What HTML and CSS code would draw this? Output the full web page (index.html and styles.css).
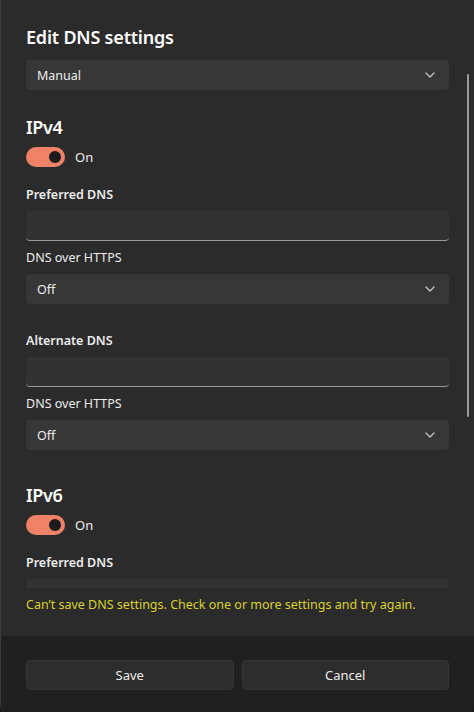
FILE: index.html
```html
<!DOCTYPE html>
<html>
<head>
<meta charset="utf-8">
<link rel="stylesheet" href="styles.css">
</head>
<body>
<div class="dialog">
  <div class="content">
    <div class="scroll">
      <h1 class="title">Edit DNS settings</h1>
      <div class="select select-first"><span>Manual</span><svg class="chev" width="10" height="6" viewBox="0 0 10 6"><path d="M1 1l4 4 4-4" fill="none" stroke="#c8c8c8" stroke-width="1.2" stroke-linecap="round" stroke-linejoin="round"/></svg></div>

      <h2 class="heading heading-v4">IPv4</h2>
      <div class="toggle-row"><span class="toggle"><span class="knob"></span></span><span class="toggle-text">On</span></div>
      <div class="label-bold">Preferred DNS</div>
      <div class="input"></div>
      <div class="label">DNS over HTTPS</div>
      <div class="select"><span>Off</span><svg class="chev" width="10" height="6" viewBox="0 0 10 6"><path d="M1 1l4 4 4-4" fill="none" stroke="#c8c8c8" stroke-width="1.2" stroke-linecap="round" stroke-linejoin="round"/></svg></div>

      <div class="label-bold label-gap">Alternate DNS</div>
      <div class="input"></div>
      <div class="label">DNS over HTTPS</div>
      <div class="select"><span>Off</span><svg class="chev" width="10" height="6" viewBox="0 0 10 6"><path d="M1 1l4 4 4-4" fill="none" stroke="#c8c8c8" stroke-width="1.2" stroke-linecap="round" stroke-linejoin="round"/></svg></div>

      <h2 class="heading heading-v6">IPv6</h2>
      <div class="toggle-row"><span class="toggle"><span class="knob"></span></span><span class="toggle-text">On</span></div>
      <div class="label-bold">Preferred DNS</div>
      <div class="input"></div>
    </div>
    <p class="error">Can’t save DNS settings. Check one or more settings and try again.</p>
  </div>
  <div class="footer">
    <button class="btn">Save</button>
    <button class="btn">Cancel</button>
  </div>
  <div class="scrollbar"></div>
</div>
</body>
</html>
```

FILE: styles.css
```css
* { box-sizing: border-box; }
html, body { margin: 0; padding: 0; background: #1c1c1c; }
body {
  font-family: "Noto Sans", "Open Sans", sans-serif;
  color: #ffffff;
}
.dialog {
  position: relative;
  width: 474px;
  height: 712px;
  display: flex;
  flex-direction: column;
  border-left: 1px solid #3a3a3a;
  border-radius: 0 0 8px 8px;
  overflow: hidden;
}
.content {
  background: #2b2b2b;
  height: 636px;
  display: flex;
  flex-direction: column;
}
.scroll {
  height: 588px;
  overflow: hidden;
  padding: 23px 25px 0 25px;
}
.title {
  margin: 0;
  font-size: 18px;
  line-height: 28px;
  font-weight: 600;
  letter-spacing: -0.2px;
  color: #ffffff;
}
.select {
  height: 30px;
  margin-top: 6px;
  background: #373737;
  border-radius: 4px;
  display: flex;
  align-items: center;
  justify-content: space-between;
  padding: 0 14px 0 11px;
  font-size: 12.5px;
  color: #ececec;
}
.select-first { margin-top: 9px; }
.heading {
  margin: 0;
  font-size: 18px;
  line-height: 28px;
  font-weight: 600;
  letter-spacing: -0.4px;
  color: #ffffff;
}
.heading-v4 { margin-top: 23px; }
.heading-v6 { margin-top: 31px; }
.toggle-row {
  margin-top: 6px;
  height: 20px;
  display: flex;
  align-items: center;
}
.toggle {
  width: 39px;
  height: 20px;
  border-radius: 10px;
  background: #ee8166;
  display: flex;
  align-items: center;
  justify-content: flex-end;
  padding-right: 4px;
}
.knob {
  width: 12px;
  height: 12px;
  border-radius: 50%;
  background: #1b1b1b;
}
.toggle-text {
  margin-left: 10px;
  font-size: 13px;
  color: #ececec;
}
.label-bold {
  margin-top: 18px;
  line-height: 20px;
  font-size: 12.5px;
  font-weight: 600;
  color: #ececec;
}
.label-gap { margin-top: 27px; }
.label {
  margin-top: 7px;
  line-height: 20px;
  font-size: 12.5px;
  color: #ececec;
}
.input {
  margin-top: 6px;
  height: 30px;
  background: #323232;
  border-radius: 4px;
  border-bottom: 1px solid #9a9a9a;
}
.error {
  margin: 8px 0 0 0;
  padding: 0 25px;
  font-size: 12.5px;
  line-height: 18px;
  color: #d9d12c;
}
.footer {
  height: 76px;
  background: #202020;
  display: flex;
  gap: 8px;
  padding: 24px 25px 0 25px;
}
.btn {
  flex: 1;
  height: 30px;
  background: #2d2d2d;
  border: 1px solid #353535;
  border-radius: 4px;
  color: #ececec;
  font-family: "Noto Sans", "Open Sans", sans-serif;
  font-size: 13px;
}
.scrollbar {
  position: absolute;
  left: 466px;
  top: 74px;
  width: 2px;
  height: 343px;
  border-radius: 1px;
  background: #9b9b9b;
}
```
